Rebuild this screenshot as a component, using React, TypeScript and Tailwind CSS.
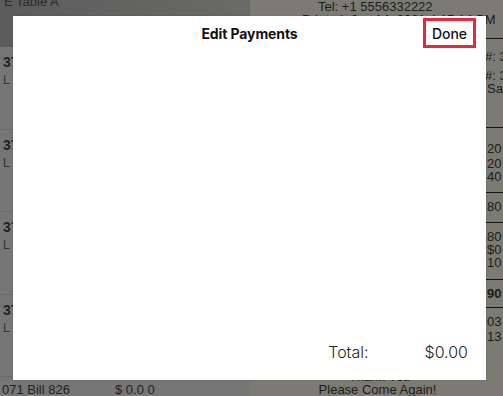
import React from "react";

const Line = ({ children, className = "" }: { children?: React.ReactNode; className?: string }) => (
  <div className={"h-[13px] leading-[13px] whitespace-nowrap " + className}>{children}</div>
);

const Rule = ({ className = "" }: { className?: string }) => (
  <div className={"h-[2px] bg-[#151515] " + className} />
);

export default function App() {
  return (
    <div className="relative w-[503px] h-[396px] overflow-hidden bg-[#7a7974] font-['Liberation_Sans',sans-serif] text-[13px] text-[#1c1c1a]">
      {/* Background page (dimmed) */}
      <div className="flex h-full">
        {/* Left list column */}
        <div className="w-[250px] shrink-0 flex flex-col bg-[#767676]">
          <div className="h-[48px] bg-gradient-to-r from-[#5c5c5c] to-[#6a6a68] pl-[4px] leading-[10px] text-[#2a2a2a]">
            <span className="relative top-[-3px]">E Table A</span>
          </div>
          {[0, 1, 2, 3].map((i) => (
            <div key={i} className="h-[84px] border-b border-[#6a6a6a] pl-[3px] pt-[7px]">
              <div className="text-[14px] leading-[16px] font-bold text-[#222]">37</div>
              <div className="mt-[2px] text-[12px] leading-[16px] text-[#333]">L</div>
            </div>
          ))}
          <div className="flex gap-[45px] pt-[6px] pl-[2px] text-[13px] leading-[13px] text-[#222]">
            <span>071 Bill 826</span>
            <span>$ 0.0 0</span>
          </div>
        </div>
        {/* Right receipt column */}
        <div className="flex-1 min-w-0 overflow-hidden flex flex-col bg-[#7b7a73]">
          <Line className="pl-[68px] h-[12px] leading-[12px]">Tel: +1 5556332222</Line>
          <Line className="pl-[52px] h-[12px] leading-[12px]">Printed: Jan 14, 2021 4:15:14 PM</Line>
          <Rule className="mt-[12px]" />
          <Line className="mt-[12px] pl-[235px]">#: 3701</Line>
          <Line className="mt-[6px] pl-[235px]">#: 3701</Line>
          <Line className="pl-[237px]">Sarah</Line>
          <Rule className="mt-[32px]" />
          <Line className="mt-[14px] pl-[237px]">20</Line>
          <Line className="mt-[2px] pl-[237px]">20</Line>
          <Line className="pl-[237px]">40</Line>
          <Rule className="mt-[9px]" />
          <Line className="mt-[8px] pl-[237px]">80</Line>
          <Rule className="mt-[9px]" />
          <Line className="mt-[8px] pl-[237px]">80</Line>
          <Line className="pl-[237px]">$0</Line>
          <Line className="pl-[237px]">10</Line>
          <Rule className="mt-[10px]" />
          <Line className="mt-[7px] pl-[237px] font-bold">90</Line>
          <Rule className="mt-[7px]" />
          <Line className="mt-[8px] pl-[237px]">03</Line>
          <Line className="mt-[2px] pl-[237px]">13</Line>
          <Line className="mt-[27px] text-center pl-[6px]">Thank You</Line>
          <Line className="text-center pl-[2px]">Please Come Again!</Line>
        </div>
      </div>

      {/* Modal */}
      <div className="absolute left-[13px] top-[16px] w-[473px] h-[364px] bg-white flex flex-col shadow-[0_0_2px_rgba(0,0,0,0.15)]">
        <div className="relative h-[34px] flex items-center justify-center">
          <span className="font-['Inter',sans-serif] font-bold text-[14px] text-[#111] tracking-[-0.1px]">Edit Payments</span>
          <div className="absolute right-[10px] top-[2px] w-[53px] h-[30px] border-[3px] border-[#e8283c] flex items-center justify-center">
            <span className="text-[14px] text-[#111] font-['Inter',sans-serif] font-medium">Done</span>
          </div>
        </div>
        <div className="flex-1" />
        <div className="flex justify-end gap-[56px] pr-[18px] pb-[16px] font-['Inter',sans-serif] text-[16px] font-light text-[#222]">
          <span>Total:</span>
          <span>$0.00</span>
        </div>
      </div>
    </div>
  );
}
